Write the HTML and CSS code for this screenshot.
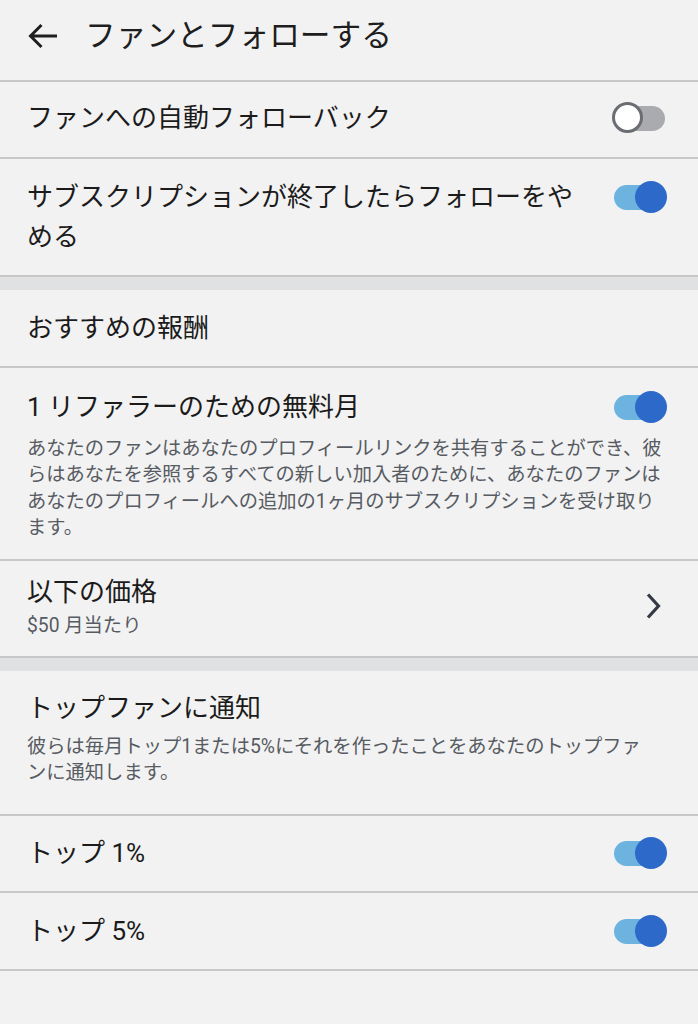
FILE: index.html
```html
<!DOCTYPE html>
<html lang="ja">
<head>
<meta charset="utf-8">
<title>ファンとフォローする</title>
<link rel="stylesheet" href="styles.css">
</head>
<body>
<div class="screen">
  <header class="appbar">
    <svg class="back" width="30" height="28" viewBox="0 0 30 28" aria-hidden="true">
      <path d="M29 14H2.5 M13.5 3 L2.5 14 L13.5 25" fill="none" stroke="#1e1e1e" stroke-width="3" stroke-linejoin="miter"/>
    </svg>
    <h1 class="appbar-title">ファンとフォローする</h1>
  </header>

  <div class="row row-a">
    <div class="row-text"><div class="title">ファンへの自動フォローバック</div></div>
    <div class="toggle off"><span class="track"></span><span class="thumb"></span></div>
  </div>

  <div class="row row-b">
    <div class="row-text"><div class="title">サブスクリプションが終了したらフォローをやめる</div></div>
    <div class="toggle on"><span class="track"></span><span class="thumb"></span></div>
  </div>

  <div class="band"></div>

  <div class="row row-c">
    <div class="row-text"><div class="title">おすすめの報酬</div></div>
  </div>

  <div class="row row-d col">
    <div class="row-head">
      <div class="title">1 リファラーのための無料月</div>
      <div class="toggle on"><span class="track"></span><span class="thumb"></span></div>
    </div>
    <p class="desc desc-d">あなたのファンはあなたのプロフィールリンクを共有することができ、彼らはあなたを参照するすべての新しい加入者のために、あなたのファンはあなたのプロフィールへの追加の1ヶ月のサブスクリプションを受け取ります。</p>
  </div>

  <div class="row row-e">
    <div class="row-text">
      <div class="title">以下の価格</div>
      <div class="sub">$50 月当たり</div>
    </div>
    <svg class="chev" width="16" height="28" viewBox="0 0 16 28" aria-hidden="true">
      <polyline points="3,2.5 13.5,14 3,25.5" fill="none" stroke="#343a44" stroke-width="3.2"/>
    </svg>
  </div>

  <div class="band"></div>

  <div class="row row-f col">
    <div class="title">トップファンに通知</div>
    <p class="desc desc-f">彼らは毎月トップ1または5%にそれを作ったことをあなたのトップファンに通知します。</p>
  </div>

  <div class="row row-g">
    <div class="row-text"><div class="title">トップ 1%</div></div>
    <div class="toggle on"><span class="track"></span><span class="thumb"></span></div>
  </div>

  <div class="row row-h">
    <div class="row-text"><div class="title">トップ 5%</div></div>
    <div class="toggle on"><span class="track"></span><span class="thumb"></span></div>
  </div>
</div>
</body>
</html>
```
FILE: styles.css
```css
* { box-sizing: border-box; }
html, body {
  margin: 0;
  padding: 0;
  background: #f2f2f2;
}
body {
  font-family: Roboto, "Noto Sans CJK JP", sans-serif;
  color: #1b1b1b;
}
.screen {
  width: 698px;
  min-height: 1024px;
  background: #f2f2f2;
}
.appbar {
  height: 82px;
  display: flex;
  align-items: center;
  padding: 0 0 8px 28px;
  border-bottom: 2px solid #c8c8c8;
}
.back { flex: none; display: block; }
.appbar-title {
  margin: 0 0 0 27px;
  font-size: 30.7px;
  font-weight: 400;
  line-height: 40px;
  color: #1e1e1e;
}
.row {
  display: flex;
  align-items: flex-start;
  padding: 0 31px 0 27px;
  border-bottom: 2px solid #c8c8c8;
}
.row.col {
  flex-direction: column;
  align-items: stretch;
}
.row-head {
  display: flex;
  align-items: flex-start;
}
.row-head .title { flex: 1; }
.row-text { flex: 1; min-width: 0; }
.title {
  font-size: 26px;
  line-height: 40px;
  color: #1b1b1b;
}
.row-b .title { padding-right: 20px; }
.desc {
  margin: 0;
  font-size: 19.3px;
  line-height: 26.3px;
  color: #575b62;
}
.sub {
  font-size: 19.3px;
  line-height: 28px;
  color: #575b62;
}
.row-a { padding-top: 16px; padding-bottom: 19px; }
.row-b { padding-top: 18px; padding-bottom: 18px; }
.row-c { padding-top: 18px; padding-bottom: 18px; }
.row-d { padding-top: 19px; padding-bottom: 18px; }
.desc-d { margin-top: 9px; }
.row-e { padding-top: 11px; padding-bottom: 16px; align-items: center; }
.row-f { padding-top: 17px; padding-bottom: 27px; }
.desc-f { margin-top: 6px; max-width: 622px; }
.row-g { padding-top: 17px; padding-bottom: 18px; }
.row-h { padding-top: 18px; padding-bottom: 18px; }
.band {
  height: 13px;
  background: #e0e1e3;
}
.chev { flex: none; display: block; margin-right: 6px; }
.toggle {
  position: relative;
  flex: none;
  width: 55px;
  height: 32px;
  margin-top: 4px;
}
.toggle .track {
  position: absolute;
  left: 2px;
  right: 2px;
  top: 4px;
  height: 25px;
  border-radius: 13px;
}
.toggle .thumb {
  position: absolute;
  top: 0;
  width: 32px;
  height: 32px;
  border-radius: 50%;
}
.toggle.on .track { background: #6db3df; }
.toggle.on .thumb { right: 0; background: #2d69c8; }
.toggle.off { margin-left: -2px; }
.toggle.off .track { background: #a9abaf; left: 6px; }
.toggle.off .thumb {
  left: 0;
  background: #ffffff;
  border: 3px solid #6a6d72;
  width: 31px;
  height: 31px;
}
```
